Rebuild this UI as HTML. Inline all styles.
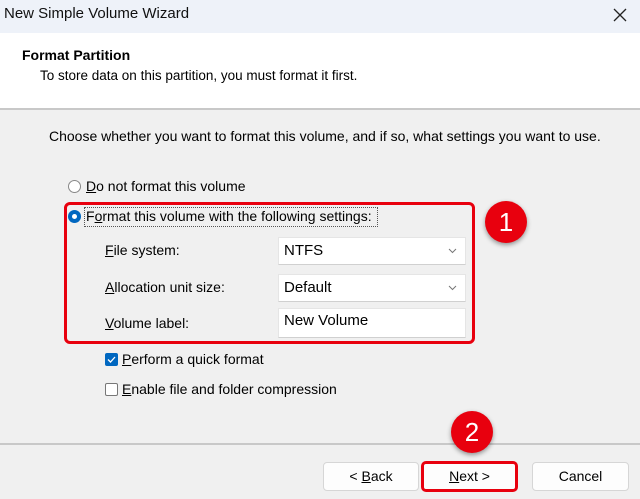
<!DOCTYPE html>
<html><head><style>
*{margin:0;padding:0;box-sizing:border-box}
body{width:640px;height:499px;overflow:hidden;background:#f0f0f0;font-family:"Liberation Sans",sans-serif;font-size:14px;color:#000;position:relative}
.a{position:absolute;white-space:nowrap}
u{text-decoration:underline}
.combo{position:absolute;background:#fff;border:1px solid #e5e5e5;border-bottom-color:#d0d0d0;font-size:15px;padding-left:5px;line-height:26px}
.btn{position:absolute;background:#fdfdfd;border:1px solid #d6d6d6;border-radius:4px;text-align:center;line-height:26px;font-size:14px}
.circ{position:absolute;width:42px;height:42px;border-radius:50%;background:#e8000e;color:#fff;font-size:26px;text-align:center;line-height:42px;box-shadow:0 2px 5px rgba(0,0,0,.4)}
</style></head><body>
<div class="a" style="left:0;top:0;width:640px;height:33px;background:#eef2f9"></div>
<div class="a" style="left:4px;top:5px;font-size:15px;color:#111">New Simple Volume Wizard</div>
<svg class="a" style="left:612px;top:7px" width="16" height="16"><path d="M2 2L14 14M14 2L2 14" stroke="#222" stroke-width="1.3"/></svg>
<div class="a" style="left:0;top:33px;width:640px;height:75px;background:#fff"></div>
<div class="a" style="left:0;top:108px;width:640px;height:2px;background:#c8c8c8"></div>
<div class="a" style="left:22px;top:47px;font-weight:bold;font-size:14px">Format Partition</div>
<div class="a" style="left:40px;top:68px;font-size:13.5px">To store data on this partition, you must format it first.</div>
<div class="a" style="left:49px;top:128px;font-size:14px">Choose whether you want to format this volume, and if so, what settings you want to use.</div>
<div class="a" style="left:68px;top:180px;width:13px;height:13px;border:1px solid #888;border-radius:50%;background:#fff"></div>
<div class="a" style="left:86px;top:178px"><u>D</u>o not format this volume</div>
<div class="a" style="left:68px;top:210px;width:13px;height:13px;border-radius:50%;background:#0067c0"><div style="position:absolute;left:4px;top:4px;width:5px;height:5px;border-radius:50%;background:#fff"></div></div>
<div class="a" style="left:84px;top:207px;width:294px;height:20px;border:1px dotted #555"></div>
<div class="a" style="left:86px;top:208px">F<u>o</u>rmat this volume with the following settings:</div>
<div class="a" style="left:64px;top:202px;width:411px;height:142px;border:3px solid #e8000e;border-radius:6px"></div>
<div class="a" style="left:105px;top:242px"><u>F</u>ile system:</div>
<div class="a" style="left:105px;top:279px"><u>A</u>llocation unit size:</div>
<div class="a" style="left:105px;top:315px"><u>V</u>olume label:</div>
<div class="combo" style="left:278px;top:237px;width:188px;height:28px">NTFS<svg style="position:absolute;right:8px;top:10px" width="9" height="6"><path d="M1 1L4.5 4.5L8 1" stroke="#777" fill="none"/></svg></div>
<div class="combo" style="left:278px;top:274px;width:188px;height:28px">Default<svg style="position:absolute;right:8px;top:10px" width="9" height="6"><path d="M1 1L4.5 4.5L8 1" stroke="#777" fill="none"/></svg></div>
<div class="combo" style="left:278px;top:308px;width:188px;height:30px;line-height:24px">New Volume</div>
<div class="circ" style="left:485px;top:201px">1</div>
<div class="a" style="left:105px;top:353px;width:13px;height:13px;border-radius:2px;background:#0067c0"><svg width="13" height="13" style="position:absolute;left:0;top:0"><path d="M3 6.5L5.5 9L10 4" stroke="#fff" stroke-width="1.3" fill="none"/></svg></div>
<div class="a" style="left:122px;top:351px"><u>P</u>erform a quick format</div>
<div class="a" style="left:105px;top:383px;width:13px;height:13px;border:1px solid #777;border-radius:2px;background:#fff"></div>
<div class="a" style="left:122px;top:381px"><u>E</u>nable file and folder compression</div>
<div class="a" style="left:0;top:443px;width:640px;height:2px;background:#c8c8c8"></div>
<div class="circ" style="left:451px;top:411px">2</div>
<div class="btn" style="left:323px;top:462px;width:96px;height:29px">&lt; <u>B</u>ack</div>
<div class="btn" style="left:421px;top:461px;width:97px;height:31px;border:3px solid #e8000e;border-radius:5px;line-height:25px"><u>N</u>ext &gt;</div>
<div class="btn" style="left:532px;top:462px;width:97px;height:29px">Cancel</div>
</body></html>
